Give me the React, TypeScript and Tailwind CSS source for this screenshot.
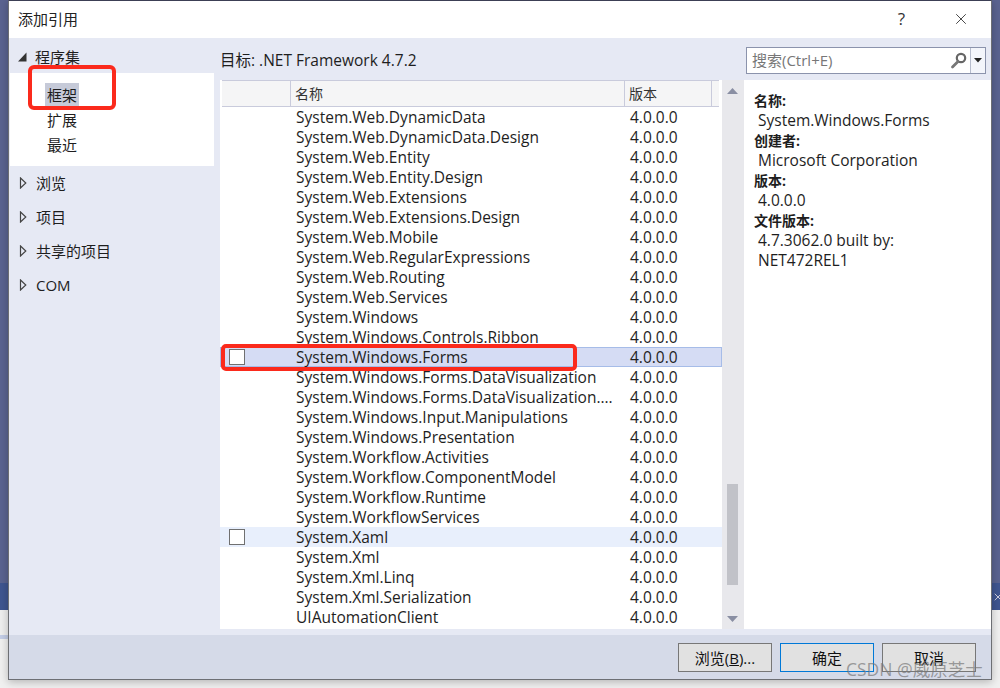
import { X } from 'lucide-react';

const FONT = '"Open Sans", "Noto Sans CJK SC", sans-serif';

const rows = [
  'System.Web.DynamicData',
  'System.Web.DynamicData.Design',
  'System.Web.Entity',
  'System.Web.Entity.Design',
  'System.Web.Extensions',
  'System.Web.Extensions.Design',
  'System.Web.Mobile',
  'System.Web.RegularExpressions',
  'System.Web.Routing',
  'System.Web.Services',
  'System.Windows',
  'System.Windows.Controls.Ribbon',
  'System.Windows.Forms',
  'System.Windows.Forms.DataVisualization',
  'System.Windows.Forms.DataVisualization....',
  'System.Windows.Input.Manipulations',
  'System.Windows.Presentation',
  'System.Workflow.Activities',
  'System.Workflow.ComponentModel',
  'System.Workflow.Runtime',
  'System.WorkflowServices',
  'System.Xaml',
  'System.Xml',
  'System.Xml.Linq',
  'System.Xml.Serialization',
  'UIAutomationClient',
];

const Expander = ({ open }: { open?: boolean }) => (
  <svg width="9" height="12" viewBox="0 0 9 12" className="shrink-0">
    {open ? (
      <path d="M8.5 1.5v9H0z" fill="#333" />
    ) : (
      <path d="M1.5 1 6.8 6 1.5 11z" fill="none" stroke="#444" strokeWidth="1.2" />
    )}
  </svg>
);

const TreeItem = ({ label }: { label: string }) => (
  <div className="flex items-center gap-[8px] pl-[10px] h-5">
    <Expander />
    <span>{label}</span>
  </div>
);

const Row = ({ name }: { name: string }) => {
  const selected = name === 'System.Windows.Forms';
  const hover = name === 'System.Xaml';
  return (
    <div
      className={`flex items-center h-5 box-border ${
        selected ? 'bg-[#d5dcf4] border border-[#a6bce8]' : hover ? 'bg-[#e8effc]' : ''
      }`}
    >
      <div className={`${selected ? 'w-[75px] pl-[8px]' : 'w-[76px] pl-[9px]'} shrink-0`}>
        {(selected || hover) && <div className="w-4 h-4 bg-white border border-[#707070]" />}
      </div>
      <div className="w-[334px] shrink-0 whitespace-nowrap overflow-hidden">{name}</div>
      <div>4.0.0.0</div>
    </div>
  );
};

const Button = ({ label, focus }: { label: React.ReactNode; focus?: boolean }) => (
  <button
    className={`w-[94px] h-[29px] bg-[#e1e1e1] border text-[15px] text-[#111] ${
      focus ? 'border-[#0078d7]' : 'border-[#777]'
    }`}
  >
    {label}
  </button>
);

export default function App() {
  return (
    <div
      className="relative w-[1000px] h-[688px] overflow-hidden bg-[#f0f0f0] flex justify-between"
      style={{ fontFamily: FONT }}
    >
      {/* what shows round the dialog */}
      <div className="w-2 flex flex-col">
        <div className="h-[583px] bg-[#5a6390]" />
        <div className="h-[27px] bg-[#3f5590]" />
        <div className="h-[25px] bg-[#eeeeee]" />
        <div className="h-1 bg-[#c3cde6]" />
        <div className="flex-1 bg-[#f0f0f0]" />
      </div>
      <div className="w-2 flex flex-col">
        <div className="h-[583px] bg-[#5a6390]" />
        <div className="h-[27px] bg-[#3f5590] flex items-center justify-start text-[#ccd] overflow-hidden">
          <X size={12} className="shrink-0" />
        </div>
        <div className="flex-1 bg-[#f0f0f0]" />
      </div>

      {/* dialog */}
      <div className="absolute left-2 top-0 w-[984px] h-[680px] bg-[#e6e9f4] border border-[#6d6f74] border-t-[#3c3f55] shadow-[0_2px_8px_rgba(0,0,0,0.25)] flex flex-col text-[15px] leading-5 text-[#1e1e1e]">
        <div className="h-[37px] shrink-0 bg-white flex items-center justify-between pl-[9px] pr-[21px]">
          <span className="text-[#222] -mt-[2px]">添加引用</span>
          <div className="flex items-center gap-[47px] -mt-[2px]">
            <span className="text-[17px] text-[#333]">?</span>
            <X size={18} strokeWidth={1.1} className="text-[#222]" />
          </div>
        </div>

        <div className="flex-1 flex min-h-0">
          {/* left tree */}
          <div className="w-[211px] shrink-0 flex flex-col pt-[9px]">
            <div className="flex items-center gap-[8px] pl-[9px] h-5 mb-[6px]">
              <Expander open />
              <span>程序集</span>
            </div>
            <div className="ml-px mr-[6px] h-[93px] bg-white pl-[37px] pt-[12px] flex flex-col gap-[5px] mb-[7px]">
              <span className="bg-[#c6cad8] self-start px-[2px] -ml-[2px] py-[2px] -my-[2px]">框架</span>
              <span>扩展</span>
              <span>最近</span>
            </div>
            <div className="flex flex-col gap-[14px]">
              <TreeItem label="浏览" />
              <TreeItem label="项目" />
              <TreeItem label="共享的项目" />
              <TreeItem label="COM" />
            </div>
          </div>

          {/* center + details */}
          <div className="flex-1 flex flex-col min-w-0">
            <div className="h-[42px] shrink-0 flex items-center justify-between pr-[5px] pt-[2px]">
              <span className="text-[15.5px]">目标: .NET Framework 4.7.2</span>
              <div className="w-[240px] h-[27px] bg-white border border-[#8b93ac] flex items-center text-[#777]">
                <span className="flex-1 pl-[5px]">搜索(Ctrl+E)</span>
                <svg width="20" height="18" viewBox="0 0 20 18" className="mr-[1px]">
                  <circle cx="12" cy="7" r="4.2" fill="none" stroke="#666" strokeWidth="2.2" />
                  <path d="M9 10.5 3.5 16" stroke="#777" strokeWidth="2.8" strokeLinecap="round" />
                </svg>
                <div className="w-[15px] h-full border-l border-[#b6bccd] bg-[#f3f5fb] flex items-center justify-center">
                  <svg width="8" height="5" viewBox="0 0 8 5">
                    <path d="M0 0h8L4 4.5z" fill="#222" />
                  </svg>
                </div>
              </div>
            </div>

            <div className="h-[549px] flex shrink-0 bg-white">
              {/* list */}
              <div className="w-[502px] shrink-0 flex flex-col overflow-hidden">
                <div className="h-[27px] shrink-0 ml-[2px] mr-[3px] flex bg-[#f5f5f6] border-t border-b border-[#c9cbdc] text-[14px] text-[#333]">
                  <div className="w-[69px] border-r border-[#c9cbdc]" />
                  <div className="w-[334px] border-r border-[#c9cbdc] pl-[4px] flex items-center">名称</div>
                  <div className="w-[87px] border-r border-[#c9cbdc] pl-[4px] flex items-center">版本</div>
                </div>
                <div className="text-[15.5px]">
                  {rows.map((r) => (
                    <Row key={r} name={r} />
                  ))}
                </div>
              </div>

              {/* scrollbar */}
              <div className="w-[22px] shrink-0 bg-[#e8e8ec] flex flex-col items-center pt-[8px] pb-[7px] pr-px">
                <svg width="11" height="6" viewBox="0 0 11 6">
                  <path d="M5.5 0 11 6H0z" fill="#8a8fa3" />
                </svg>
                <div className="flex-1 w-full flex flex-col justify-end pb-[31px] items-center">
                  <div className="w-[11px] h-[101px] bg-[#c1c2c8]" />
                </div>
                <svg width="11" height="6" viewBox="0 0 11 6">
                  <path d="M0 0h11L5.5 6z" fill="#8a8fa3" />
                </svg>
              </div>

              {/* details */}
              <div className="flex-1 pl-[10px] pt-[10px] text-[15.5px]">
                <div className="font-bold text-[14px] translate-y-px">名称:</div>
                <div className="pl-[4px]">System.Windows.Forms</div>
                <div className="font-bold text-[14px] translate-y-px">创建者:</div>
                <div className="pl-[4px]">Microsoft Corporation</div>
                <div className="font-bold text-[14px] translate-y-px">版本:</div>
                <div className="pl-[4px]">4.0.0.0</div>
                <div className="font-bold text-[14px] translate-y-px">文件版本:</div>
                <div className="pl-[4px]">4.7.3062.0 built by:</div>
                <div className="pl-[4px]">NET472REL1</div>
              </div>
            </div>
          </div>
        </div>

        {/* footer */}
        <div className="h-[44px] mt-[6px] shrink-0 bg-[#d5dae8] flex items-start justify-end gap-[8px] pr-[15px] pt-[8px]">
          <Button
            label={
              <>
                浏览(<span className="underline">B</span>)...
              </>
            }
          />
          <Button label="确定" focus />
          <Button label="取消" />
        </div>
      </div>

      {/* annotations drawn over the screenshot */}
      <div className="absolute left-[28px] top-[65px] w-[88px] h-[45px] border-4 border-[#fb2a1c] rounded-[6px]" />
      <div className="absolute left-[221px] top-[344px] w-[356px] h-[27px] border-4 border-[#fb2a1c] rounded-[5px]" />
      <div className="absolute left-[846px] top-[659px] text-[17.5px] leading-5 text-[#777]/70 whitespace-nowrap">
        CSDN @威原芝士
      </div>
    </div>
  );
}
